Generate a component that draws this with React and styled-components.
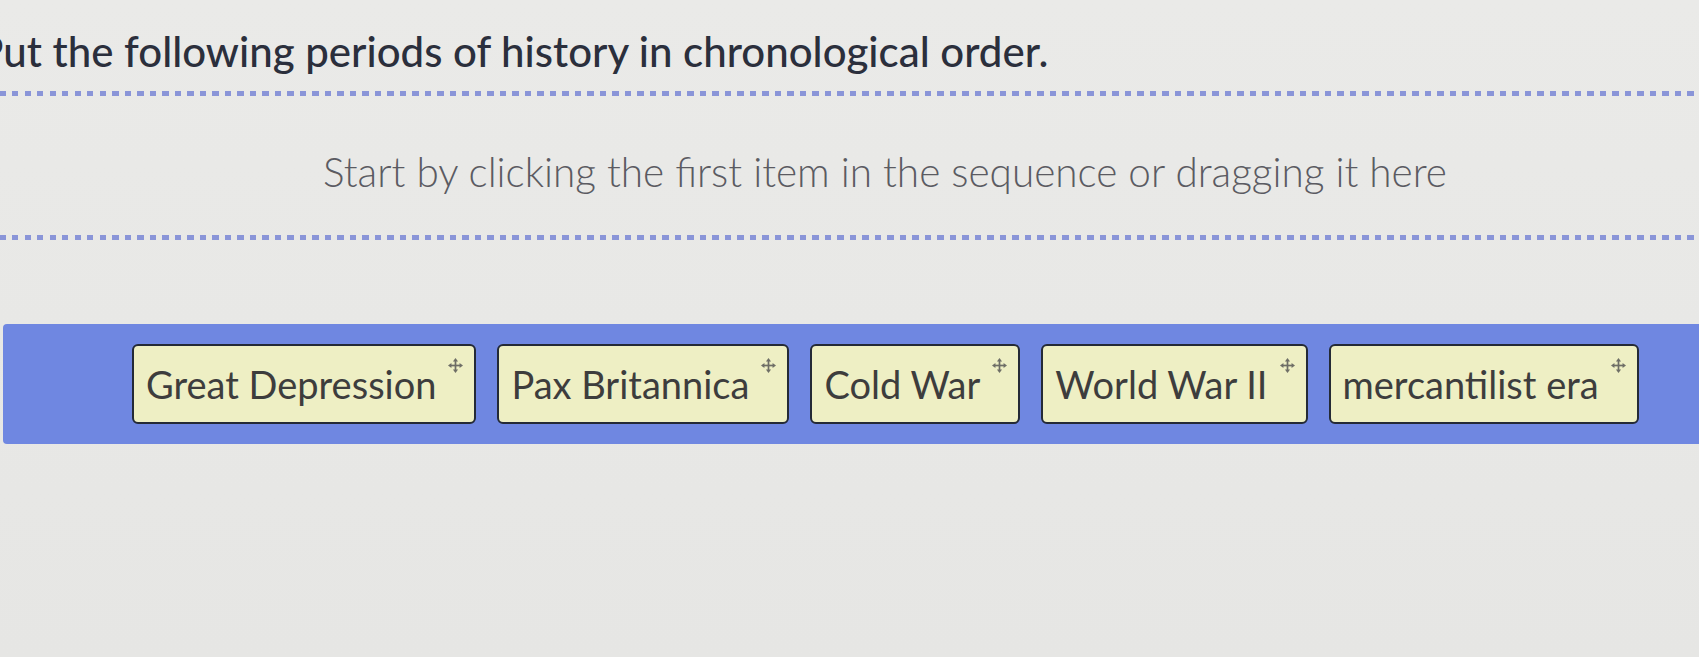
import styled, { createGlobalStyle } from 'styled-components';

const GlobalStyle = createGlobalStyle`
  html, body {
    margin: 0;
    padding: 0;
    background: #e8e8e6;
    overflow: hidden;
  }
  body {
    font-family: Lato, "Open Sans", sans-serif;
  }
`;

// page shell
const Page = styled.div`
  width: 100%;
  min-height: 657px;
  background: linear-gradient(180deg, #eaeae8 0%, #e6e6e4 100%);
  overflow: hidden;
`;

const Title = styled.h1`
  margin: 0 0 0 -22px;
  padding-top: 26px;
  font-size: 42px;
  line-height: 50px;
  font-weight: 500;
  color: #2b2f3c;
  white-space: nowrap;
`;

const DotLine = styled.div`
  height: 5px;
  margin-top: ${(p) => p.$top || 0}px;
  background: repeating-linear-gradient(
    to right,
    #8a95d8 0 6px,
    transparent 6px 12.5px
  );
`;

const DropZone = styled.div`
  padding: 53px 0 40px 71px;
  text-align: center;
`;

const Prompt = styled.p`
  margin: 0;
  font-size: 40.5px;
  line-height: 46px;
  font-weight: 300;
  color: #5b5b62;
  white-space: nowrap;
`;

// tray of draggable items
const Tray = styled.div`
  display: flex;
  align-items: center;
  gap: 21px;
  height: 120px;
  margin: 84px 0 0 3px;
  padding-left: 129px;
  background: #6f87e1;
  border-radius: 4px 0 0 4px;
  box-sizing: border-box;
`;

const Card = styled.div`
  display: flex;
  align-items: flex-start;
  height: 80px;
  padding: 0 11px 0 12px;
  box-sizing: border-box;
  background: #eeefc4;
  border: 2.5px solid #242a36;
  border-radius: 6px;
  cursor: move;
`;

const CardLabel = styled.span`
  align-self: center;
  font-size: 38px;
  line-height: 46px;
  color: #3d3d3d;
  white-space: nowrap;
`;

const Grip = styled.svg`
  width: 15px;
  height: 15px;
  margin: 12px 0 0 12px;
  flex-shrink: 0;
`;

const MoveIcon = () => (
  <Grip viewBox="0 0 14 14" fill="#6e6e66">
    <rect x="6.2" y="2.5" width="1.6" height="9" />
    <rect x="2.5" y="6.2" width="9" height="1.6" />
    <polygon points="7,0 9.4,3.2 4.6,3.2" />
    <polygon points="7,14 9.4,10.8 4.6,10.8" />
    <polygon points="0,7 3.2,4.6 3.2,9.4" />
    <polygon points="14,7 10.8,4.6 10.8,9.4" />
  </Grip>
);

const items = ['Great Depression', 'Pax Britannica', 'Cold War', 'World War II', 'mercantilist era'];

export default function App() {
  return (
    <Page>
      <GlobalStyle />
      <Title>Put the following periods of history in chronological order.</Title>
      <DotLine $top={15} />
      <DropZone>
        <Prompt>Start by clicking the first item in the sequence or dragging it here</Prompt>
      </DropZone>
      <DotLine />
      <Tray>
        {items.map((item) => (
          <Card key={item}>
            <CardLabel>{item}</CardLabel>
            <MoveIcon />
          </Card>
        ))}
      </Tray>
    </Page>
  );
}
